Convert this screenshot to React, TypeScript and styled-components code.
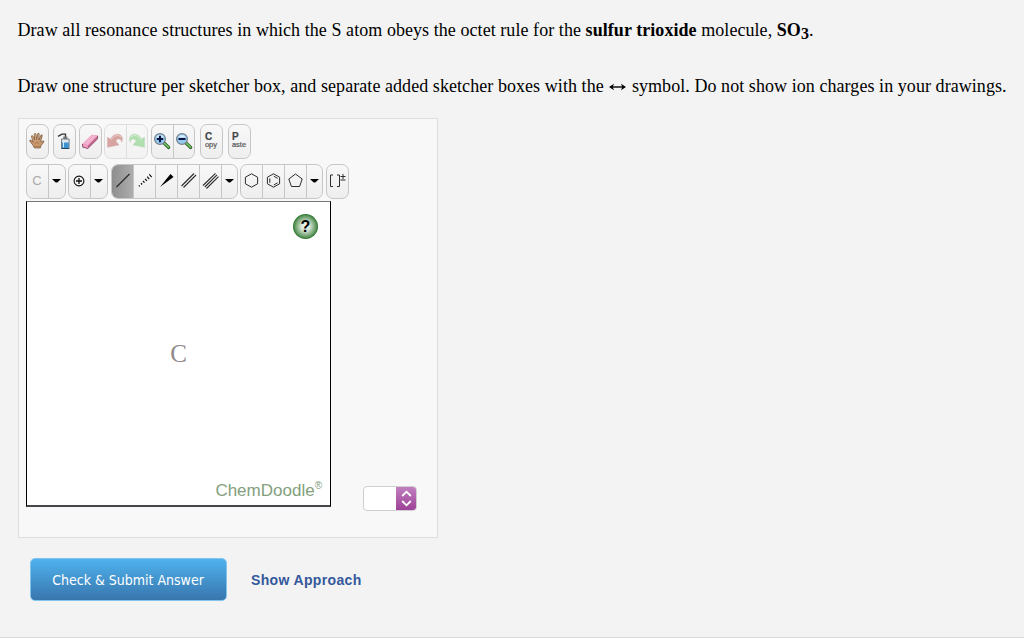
import React from 'react';
import styled, { createGlobalStyle, css } from 'styled-components';

const GlobalStyle = createGlobalStyle`
    * {
        box-sizing: border-box;
    }

    body {
        margin: 0;
        background: #f3f3f3;
        overflow: hidden;
    }
`;

const Page = styled.main`
    height: 638px;
    padding: 19px 0 0 18px;
    border-bottom: 1px solid #d9d9d9;
    font-family: 'Liberation Serif', 'Times New Roman', serif;
`;

const Question = styled.p<{ $spacing: string }>`
    height: 22px;
    margin: 0 0 34px -0.5px;
    color: #000;
    font-size: 18px;
    line-height: 22px;
    white-space: nowrap;
    letter-spacing: ${({ $spacing }) => $spacing};

    sub {
        font-size: 16px;
        line-height: 0;
        vertical-align: -3px;
    }
`;

const ArrowIcon = styled.svg`
    width: 19px;
    height: 10px;
    vertical-align: 0;
`;

// Sketcher
const Panel = styled.section`
    display: flex;
    align-items: flex-end;
    width: 420px;
    height: 420px;
    margin-top: -13px;
    padding: 5px 0 30px 7px;
    border: 1px solid #dedede;
    background: #f8f8f8;
`;

const Sketcher = styled.div`
    width: 330px;
    height: 383px;
`;

const Toolbar = styled.div`
    display: flex;
    height: 35px;
    margin-bottom: 5px;
`;

const Group = styled.div<{ $gap?: number; $faded?: boolean }>`
    display: flex;
    height: 35px;
    margin-left: ${({ $gap }) => $gap || 0}px;
    border: 1px solid #c6c6c6;
    border-radius: 7px;
    background: linear-gradient(#f8f8f8, #eeeeee);
    overflow: hidden;
    opacity: ${({ $faded }) => ($faded ? 0.5 : 1)};
`;

const Tool = styled.button<{ $width?: number; $active?: boolean }>`
    display: flex;
    align-items: center;
    justify-content: center;
    width: ${({ $width }) => $width || 21}px;
    padding: 0 1px 2px 0;
    border: 0;
    background: none;

    & + & {
        border-left: 1px solid #c6c6c6;
    }

    ${({ $active }) =>
        $active &&
        css`
            background: linear-gradient(90deg, #8e8e8e, #adadad);
        `}

    svg {
        display: block;
        flex: none;
    }
`;

const Letter = styled.span`
    color: #aaa;
    font: 13px/14px 'Liberation Sans', Arial, sans-serif;
`;

const ClipLabel = styled.span`
    display: flex;
    flex-direction: column;
    align-items: flex-start;
    color: #555;
    font: 7.5px/8px 'Liberation Sans', Arial, sans-serif;
    -webkit-text-stroke: 0.2px #555;

    b {
        color: #444;
        font-size: 10px;
        line-height: 8px;
    }
`;

const Canvas = styled.div`
    position: relative;
    display: flex;
    align-items: center;
    justify-content: center;
    width: 305px;
    height: 306px;
    margin-top: -3px;
    border: 1px solid #000;
    border-top-color: #777;
    border-bottom: 2px solid #44464a;
    background: #fff;
`;

const HoverAtom = styled.span`
    color: #8f8888;
    font-size: 25px;
    line-height: 28px;
    padding-top: 1px;
`;

const Help = styled.span`
    position: absolute;
    top: 12px;
    right: 12px;
    display: flex;
    align-items: center;
    justify-content: center;
    width: 25px;
    height: 25px;
    border-radius: 50%;
    background: radial-gradient(circle, #ffffff 0, #d5e3d5 25%, #579257 62%, #24702a 70%);
    color: #000;
    font: bold 16px/25px 'Liberation Sans', Arial, sans-serif;
`;

const Brand = styled.span`
    position: absolute;
    right: 8px;
    bottom: 4px;
    color: #83a07d;
    font: 17px/20px 'Liberation Sans', Arial, sans-serif;

    sup {
        font-size: 10px;
        line-height: 0;
        vertical-align: 7px;
    }
`;

const Select = styled.div`
    display: flex;
    width: 54px;
    height: 25px;
    margin: 0 0 -4px 7px;
    border: 1px solid #cfcfcf;
    border-radius: 4px;
    background: #fff;
    overflow: hidden;
`;

const SelectHandle = styled.span`
    display: flex;
    align-items: center;
    justify-content: center;
    width: 21px;
    height: 25px;
    margin: -1px -1px -1px auto;
    background: linear-gradient(#c281c0, #9c3f96);
`;

const Actions = styled.div`
    display: flex;
    align-items: center;
    height: 43px;
    margin: 20px 0 0 12px;
`;

const SubmitButton = styled.button`
    width: 197px;
    height: 43px;
    padding: 0 1px 0 0;
    border: 1px solid #83c4ec;
    border-radius: 5px;
    background: linear-gradient(#4fb2ee, #3876ad);
    color: #fff;
    font: 14px/20px 'DejaVu Sans Condensed', 'Noto Sans', sans-serif;
    white-space: nowrap;
`;

const ApproachLink = styled.a`
    margin-left: 24px;
    color: #33589c;
    font: bold 14px/18px 'Liberation Sans', Arial, sans-serif;
    letter-spacing: 0.35px;
    white-space: nowrap;
`;

const Caret = () => (
    <svg width="9" height="4" viewBox="0 0 9 4">
        <path d="M0 0h9L5.3 3.6H3.7z" fill="#000" />
    </svg>
);

const HandIcon = () => (
    <svg width="16" height="18" viewBox="0 0 16 18">
        <path
            d="M5.5 16 3.8 13 .8 9.2c-.5-1 .5-1.5 1.3-.8l2 1.6L2.5 4.7c-.3-1.2 1-1.5 1.5-.4L5.6 8 5.3 2.3c0-1.2 1.5-1.2 1.7 0l.8 5.5.8-5.9c.2-1.1 1.7-.9 1.6.2L9.9 8l1.9-4.7c.5-1 1.8-.5 1.4.6l-1.5 5.3.3.8 1.7-1c.9-.5 1.7.4 1 1.2l-2.6 3.3-.8 2.5z"
            fill="#c8986c"
            stroke="#6e5038"
            strokeWidth=".7"
        />
        <path d="m6 11.5 2-1 2 1M5.5 14.5h5.6" stroke="#966a45" strokeWidth=".6" fill="none" />
        <path d="m3.3 4.6 1.8 5M6.2 2.5l.7 6M9.5 2.3 8.7 9" stroke="#d9aa80" strokeWidth=".7" />
    </svg>
);

const BottleIcon = () => (
    <svg width="14" height="18" viewBox="0 0 14 18">
        <path d="M1 4.4 5 2.2h3.5V5" fill="none" stroke="#333" strokeWidth="1.3" />
        <path d="M6.3 4.5h4V7h-4z" fill="#777" />
        <path d="M4.5 7h7.6v9.5H4.5z" fill="#e3e6e8" stroke="#53606a" strokeWidth=".8" />
        <path d="M5 10.5h6.8V16H5z" fill="#3d91d0" />
        <path d="M6.5 7.8v7.5" stroke="#d3edfc" strokeWidth="1" />
        <path d="M4.5 16.5h7.6" stroke="#28445b" />
    </svg>
);

const EraserIcon = () => (
    <svg width="18" height="18" viewBox="0 0 18 18">
        <path d="m1.4 12 9.6-9.2 5.6 1v3L6.8 16.5l-5-1.3z" fill="#c9648f" />
        <path d="m1.4 12 9.6-9.2 5.6 1-9.8 9.6z" fill="#f3b3d0" />
        <path d="m1.4 12 5.4 1.4v3.1l-5-1.3z" fill="#ef9dc1" />
        <path d="m6.8 16.5 9.8-9.7v-3M1.4 12l.4 3.2 5 1.3" fill="none" stroke="#7b405d" strokeWidth=".8" />
    </svg>
);

const UndoIcon = () => (
    <svg width="18" height="18" viewBox="0 0 18 18">
        <path
            d="M1.5 5.2 4.6 7C6.6 2.8 10.500 1.300 13.500 2.600c3 1.300 3.500 4.400 2.300 7.600-.9-3.600-3.600-4.400-6-1.200l3.200 4L1.500 15.300z"
            fill="#b9534c"
            stroke="#a85c55"
            strokeWidth=".4"
        />
        <path d="M5.400 7.800C7.500 3.600 12 2.200 15 5" fill="none" stroke="#e0a59e" />
    </svg>
);

const RedoIcon = () => (
    <svg width="18" height="18" viewBox="0 0 18 18">
        <path
            d="M16.500 5.200 13.400 7C11.400 2.800 7.500 1.300 4.500 2.600 1.500 3.900 1 7 2.200 10.200c.9-3.600 3.600-4.400 6-1.200l-3.200 4 11.500 2.300z"
            fill="#6cc868"
            stroke="#69ab68"
            strokeWidth=".4"
        />
        <path d="M12.600 7.800C10.500 3.600 6 2.200 3 5" fill="none" stroke="#b9ecb5" />
    </svg>
);

const MagnifierIcon = ({ plus }: { plus?: boolean }) => (
    <svg width="18" height="18" viewBox="0 0 18 18">
        <path d="m10.5 10.5 5.2 5" stroke="#315f2e" strokeWidth="3.2" strokeLinecap="round" />
        <path d="m11.5 11.3 4 3.8" stroke="#6fc25d" strokeWidth="1.6" strokeLinecap="round" />
        <circle cx="7" cy="7" r="5.4" fill="#94c9f0" stroke="#777f88" strokeWidth="1.2" />
        <path d="M3 5.5a4.5 4.5 0 0 1 8 0" fill="#d7efff" />
        <path d={plus ? 'M3.8 7h6.4M7 3.8v6.4' : 'M3.5 7h7'} stroke="#0a1440" strokeWidth="2.1" />
    </svg>
);

const LineIcon = ({ d, width = 1 }: { d: string; width?: number }) => (
    <svg width="17" height="17" viewBox="0 0 17 17">
        <path d={d} fill="none" stroke="#2c2c2c" strokeWidth={width} />
    </svg>
);

const WedgeIcon = () => (
    <svg width="17" height="17" viewBox="0 0 17 17">
        <path d="M2 15 12.5 2 15.5 5z" fill="#000" />
    </svg>
);

export default function App() {
    return (
        <>
            <GlobalStyle />
            <Page>
                <Question $spacing="0.06px">
                    Draw all resonance structures in which the S atom obeys the octet rule for the <b>sulfur trioxide</b> molecule,{' '}
                    <b>
                        SO<sub>3</sub>
                    </b>
                    .
                </Question>
                <Question $spacing="0.063px">
                    Draw one structure per sketcher box, and separate added sketcher boxes with the{' '}
                    <ArrowIcon viewBox="0 0 19 10">
                        <path d="M3 5h13" stroke="#000" strokeWidth="1.4" />
                        <path d="M1 5l5-3.2-1.3 3.2L6 8.2zM18 5l-5-3.2 1.3 3.2L13 8.2z" fill="#000" />
                    </ArrowIcon>{' '}
                    symbol. Do not show ion charges in your drawings.
                </Question>

                <Panel>
                    <Sketcher>
                        <Toolbar>
                            <Group>
                                <Tool><HandIcon /></Tool>
                            </Group>
                            <Group $gap={4}>
                                <Tool><BottleIcon /></Tool>
                            </Group>
                            <Group $gap={3}>
                                <Tool><EraserIcon /></Tool>
                            </Group>
                            <Group $gap={2} $faded>
                                <Tool><UndoIcon /></Tool>
                                <Tool><RedoIcon /></Tool>
                            </Group>
                            <Group $gap={3}>
                                <Tool><MagnifierIcon plus /></Tool>
                                <Tool><MagnifierIcon /></Tool>
                            </Group>
                            <Group $gap={5}>
                                <Tool><ClipLabel><b>C</b>opy</ClipLabel></Tool>
                            </Group>
                            <Group $gap={5}>
                                <Tool><ClipLabel><b>P</b>aste</ClipLabel></Tool>
                            </Group>
                        </Toolbar>

                        <Toolbar>
                            <Group>
                                <Tool><Letter>C</Letter></Tool>
                                <Tool $width={17}><Caret /></Tool>
                            </Group>
                            <Group $gap={2}>
                                <Tool>
                                    <svg width="12" height="12" viewBox="0 0 12 12">
                                        <circle cx="6" cy="6" r="4.9" fill="none" stroke="#111" strokeWidth="1.1" />
                                        <path d="M3 6h6M6 3v6" stroke="#111" strokeWidth="1.3" />
                                    </svg>
                                </Tool>
                                <Tool $width={17}><Caret /></Tool>
                            </Group>
                            <Group $gap={3}>
                                <Tool $active><LineIcon d="M2.500 15 15.500 2" width={1.3} /></Tool>
                                <Tool $width={22}>
                                    <svg width="17" height="17" viewBox="0 0 17 17">
                                        <path
                                            d="m2.900 13.400.8.900M5 11.200l1.100 1.300M7 9l1.500 1.700M9.100 6.800l1.800 2.100M11.200 4.600l2.100 2.500M13.300 2.400l2.400 2.800"
                                            stroke="#111"
                                            strokeWidth="1.2"
                                        />
                                    </svg>
                                </Tool>
                                <Tool $width={22}><WedgeIcon /></Tool>
                                <Tool $width={22}><LineIcon d="M1.500 14 14 1.500M3.500 15.500 16 3" width={1.1} /></Tool>
                                <Tool $width={22}><LineIcon d="M1 13.500 13.500 1.300M2.800 15 15 2.900M4.500 16.500 16.500 4.700" width={1.1} /></Tool>
                                <Tool $width={16}><Caret /></Tool>
                            </Group>
                            <Group $gap={2}>
                                <Tool><LineIcon d="M8.500 1.800 14.600 5.200v6.600l-6.100 3.400-6.100-3.400V5.200z" /></Tool>
                                <Tool $width={22}>
                                    <LineIcon d="M8.500 1.800 14.600 5.200v6.600l-6.100 3.400-6.100-3.400V5.200zM8.800 4.200l3.800 2.200M12.600 10.800 8.800 13M4.800 6.400v4.400" />
                                </Tool>
                                <Tool $width={22}><LineIcon d="m8.500 2 6.700 5-2.600 7.500H4.400L1.800 7z" /></Tool>
                                <Tool $width={16}><Caret /></Tool>
                            </Group>
                            <Group $gap={3}>
                                <Tool>
                                    <LineIcon d="M4 3H1.500v11.500H4M8 3h2.500v11.500H8M11.500 4.500h5M14 2v5M11.500 8h5" />
                                </Tool>
                            </Group>
                        </Toolbar>

                        <Canvas>
                            <Help>?</Help>
                            <HoverAtom>C</HoverAtom>
                            <Brand>
                                ChemDoodle<sup>®</sup>
                            </Brand>
                        </Canvas>
                    </Sketcher>
                    <Select>
                        <SelectHandle>
                            <svg width="11" height="17" viewBox="0 0 11 17">
                                <path d="m1.200 6 4.300-4.300L9.800 6M1.200 11l4.300 4.300L9.800 11" fill="none" stroke="#fff" strokeWidth="1.8" />
                            </svg>
                        </SelectHandle>
                    </Select>
                </Panel>

                <Actions>
                    <SubmitButton>Check &amp; Submit Answer</SubmitButton>
                    <ApproachLink>Show Approach</ApproachLink>
                </Actions>
            </Page>
        </>
    );
}
